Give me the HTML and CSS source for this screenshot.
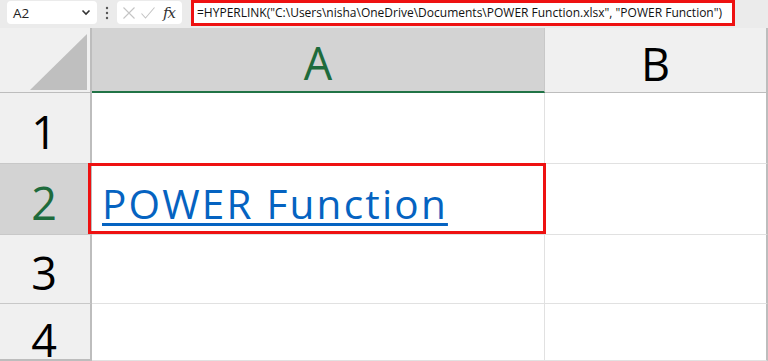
FILE: index.html
```html
<!DOCTYPE html>
<html>
<head>
<meta charset="utf-8">
<link rel="stylesheet" href="styles.css">
</head>
<body>
<div class="bar">
  <div class="namebox">
    <span class="ref">A2</span>
    <svg class="chev" width="10" height="7" viewBox="0 0 10 7"><path d="M1.5 1.5 L5 5 L8.5 1.5" fill="none" stroke="#333" stroke-width="1.6"/></svg>
  </div>
  <svg class="dots" width="4" height="14" viewBox="0 0 4 14"><circle cx="2" cy="2" r="1.2" fill="#555"/><circle cx="2" cy="7" r="1.2" fill="#555"/><circle cx="2" cy="12" r="1.2" fill="#555"/></svg>
  <div class="fnbox">
    <svg width="14" height="14" viewBox="0 0 14 14"><path d="M1.5 1.5 L12.5 12.5 M12.5 1.5 L1.5 12.5" stroke="#c4c4c4" stroke-width="1.1" fill="none"/></svg>
    <svg width="16" height="14" viewBox="0 0 16 14"><path d="M1.5 7.5 L5.5 12 L14.5 1.5" stroke="#c4c4c4" stroke-width="1.1" fill="none"/></svg>
    <span class="fx">fx</span>
  </div>
  <div class="formula">=HYPERLINK("C:\Users\nisha\OneDrive\Documents\POWER Function.xlsx", "POWER Function")</div>
</div>
<div class="sheet">
  <div class="corner"><div class="tri"></div></div>
  <div class="colhead sel">A</div>
  <div class="colhead last">B</div>

  <div class="rowhead">1</div>
  <div class="cell"></div>
  <div class="cell last"></div>

  <div class="rowhead sel">2</div>
  <div class="cell active"><a class="link">POWER Function</a><div class="mark"></div></div>
  <div class="cell last"></div>

  <div class="rowhead">3</div>
  <div class="cell"></div>
  <div class="cell last"></div>

  <div class="rowhead top">4</div>
  <div class="cell"></div>
  <div class="cell last"></div>
</div>
</body>
</html>
```
FILE: styles.css
```css
html, body {
  margin: 0;
  padding: 0;
  background: #ffffff;
  font-family: "Open Sans", "Noto Sans", sans-serif;
  width: 768px;
  height: 361px;
  overflow: hidden;
}
.bar {
  height: 28px;
  background: #ebebeb;
  display: flex;
  align-items: flex-start;
  padding-left: 7px;
  box-sizing: border-box;
}
.namebox {
  margin-top: 1px;
  width: 90px;
  height: 23px;
  background: #fff;
  border-radius: 4px;
  display: flex;
  align-items: center;
  justify-content: space-between;
  padding: 0 6px 0 6px;
  box-sizing: border-box;
}
.ref {
  font-size: 13.5px;
  color: #222;
}
.dots {
  margin: 6px 0 0 8px;
}
.fnbox {
  margin: 1px 0 0 8px;
  width: 65px;
  height: 23px;
  background: #fff;
  border-radius: 4px;
  display: flex;
  align-items: center;
  padding-left: 5px;
  gap: 4px;
  box-sizing: border-box;
}
.fx {
  font-family: "DejaVu Serif", "Liberation Serif", serif;
  font-style: italic;
  font-size: 15px;
  color: #333;
  margin-left: 3px;
  letter-spacing: -1px;
}
.formula {
  margin-left: 9px;
  width: 544px;
  height: 26px;
  border: 3px solid #ee1111;
  background: #fff;
  box-sizing: border-box;
  font-size: 12px;
  letter-spacing: 0;
  line-height: 19px;
  padding-left: 3px;
  color: #111;
  white-space: nowrap;
  overflow: hidden;
}
.sheet {
  display: grid;
  grid-template-columns: 92px 453px 223px;
  grid-template-rows: 65px 71px 71px 69px 57px;
}
.corner {
  background: #f0f0f0;
  border-right: 2px solid #bdbdbd;
  border-bottom: 1px solid #bdbdbd;
  box-sizing: border-box;
  display: flex;
  justify-content: flex-end;
  align-items: flex-end;
  padding: 0 3px 2px 0;
}
.tri {
  width: 0;
  height: 0;
  border-left: 57px solid transparent;
  border-bottom: 56px solid #bfbfbf;
}
.colhead {
  background: #f0f0f0;
  border-right: 1px solid #c8c8c8;
  border-bottom: 1px solid #bdbdbd;
  box-sizing: border-box;
  display: flex;
  justify-content: center;
  align-items: center;
  font-size: 45px;
  color: #000;
  padding-top: 6px;
}
.colhead.sel {
  background: #d3d3d3;
  color: #1e6b3c;
  border-bottom: 2px solid #217346;
}
.colhead.last {
  border-right: 2px solid #bdbdbd;
}
.rowhead {
  background: #f0f0f0;
  border-right: 2px solid #bdbdbd;
  border-bottom: 1px solid #c8c8c8;
  box-sizing: border-box;
  display: flex;
  justify-content: center;
  align-items: center;
  font-size: 45px;
  color: #000;
  padding-top: 6px;
  padding-right: 2px;
}
.rowhead.top {
  align-items: flex-start;
  line-height: 34px;
  padding-top: 19px;
  border-bottom: 2px solid #bdbdbd;
}
.rowhead.sel {
  background: #d3d3d3;
  color: #1e6b3c;
}
.cell {
  border-right: 1px solid #e1e1e1;
  border-bottom: 1px solid #e1e1e1;
  box-sizing: border-box;
  background: #fff;
}
.cell.last {
  border-right: 2px solid #bdbdbd;
}
.active {
  position: relative;
  display: flex;
  align-items: flex-end;
  padding: 0 0 6px 10px;
}
.link {
  font-size: 40.5px;
  line-height: 48px;
  color: #0563c1;
  text-decoration: underline;
  text-decoration-thickness: 3px;
  text-underline-offset: 4px;
  letter-spacing: 2.2px;
  white-space: nowrap;
}
.mark {
  position: absolute;
  left: -4px;
  top: -1px;
  right: -2px;
  bottom: 0px;
  border: 3px solid #ee1111;
  pointer-events: none;
}
```
